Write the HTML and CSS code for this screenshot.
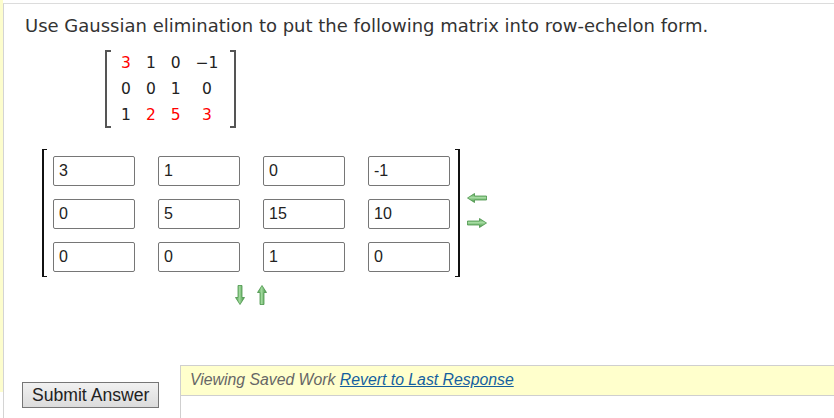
FILE: index.html
```html
<!DOCTYPE html>
<html>
<head>
<meta charset="utf-8">
<link rel="stylesheet" href="styles.css">
</head>
<body>
<div class="frame">
  <div class="strip"></div>
  <div class="main">
    <p class="question">Use Gaussian elimination to put the following matrix into row-echelon form.</p>
    <div class="given">
      <span class="br br-l"></span>
      <div class="given-grid">
        <span class="red">3</span><span>1</span><span>0</span><span>−1</span>
        <span>0</span><span>0</span><span>1</span><span>0</span>
        <span>1</span><span class="red">2</span><span class="red">5</span><span class="red">3</span>
      </div>
      <span class="br br-r"></span>
    </div>
    <div class="answer">
      <div class="answer-col">
        <div class="answer-matrix">
          <span class="abr abr-l"></span>
          <div class="answer-grid">
            <input class="cell" value="3"><input class="cell" value="1"><input class="cell" value="0"><input class="cell" value="-1">
            <input class="cell" value="0"><input class="cell" value="5"><input class="cell" value="15"><input class="cell" value="10">
            <input class="cell" value="0"><input class="cell" value="0"><input class="cell" value="1"><input class="cell" value="0">
          </div>
          <span class="abr abr-r"></span>
        </div>
        <div class="col-arrows">
          <svg class="varrow" width="10" height="20" viewBox="0 0 10 20">
            <defs><linearGradient id="gv" x1="0" y1="0" x2="1" y2="0"><stop offset="0" stop-color="#4f9d4f"/><stop offset="0.45" stop-color="#9fd89b"/><stop offset="1" stop-color="#3f8f3f"/></linearGradient></defs>
            <path d="M3 0.5 H7 V12.5 H9.5 L5 19.5 L0.5 12.5 H3 Z" fill="url(#gv)" stroke="#4a944a" stroke-width="0.8"/>
          </svg>
          <svg class="varrow" width="10" height="20" viewBox="0 0 10 20">
            <path d="M3 19.5 H7 V7.5 H9.5 L5 0.5 L0.5 7.5 H3 Z" fill="url(#gv)" stroke="#4a944a" stroke-width="0.8"/>
          </svg>
        </div>
      </div>
      <div class="row-arrows">
        <svg width="20" height="10" viewBox="0 0 20 10">
          <defs><linearGradient id="gh" x1="0" y1="0" x2="0" y2="1"><stop offset="0" stop-color="#4f9d4f"/><stop offset="0.45" stop-color="#a6dca2"/><stop offset="1" stop-color="#3f8f3f"/></linearGradient></defs>
          <path d="M0.5 5 L7.5 0.5 V3 H19.5 V7 H7.5 V9.5 Z" fill="url(#gh)" stroke="#4a944a" stroke-width="0.8"/>
        </svg>
        <svg width="20" height="10" viewBox="0 0 20 10">
          <path d="M19.5 5 L12.5 0.5 V3 H0.5 V7 H12.5 V9.5 Z" fill="url(#gh)" stroke="#4a944a" stroke-width="0.8"/>
        </svg>
      </div>
    </div>
    <div class="bottom">
      <div class="submit-col"><button class="submit">Submit Answer</button></div>
      <div class="notice-col">
        <div class="notice">Viewing Saved Work <a href="#" class="revert">Revert to Last Response</a></div>
      </div>
    </div>
  </div>
</div>
</body>
</html>
```
FILE: styles.css
```css
html, body {
  margin: 0;
  padding: 0;
  background: #fff;
}
.frame {
  display: flex;
  height: 418px;
  overflow: hidden;
}
.strip {
  width: 3px;
  height: 392px;
  flex: none;
  background: #fdfdcd;
}
.main {
  flex: 1;
  margin-top: 3px;
  border-top: 1px solid #dcdcdc;
  border-left: 1px solid #d4d4d4;
  display: flex;
  flex-direction: column;
  padding-left: 21px;
  min-width: 0;
}
.question {
  margin: 11px 0 0 0;
  font-family: "DejaVu Sans", Verdana, sans-serif;
  font-size: 18px;
  line-height: 22px;
  color: #333;
  white-space: nowrap;
}
.given {
  display: flex;
  width: fit-content;
  margin: 13px 0 0 80px;
  height: 78px;
}
.br {
  width: 4px;
  border: 2px solid #555;
}
.br-l { border-right: none; }
.br-r { border-left: none; }
.given-grid {
  display: grid;
  grid-template-columns: repeat(4, auto);
  column-gap: 15px;
  justify-items: center;
  padding: 0 12px 0 10px;
  font-family: "DejaVu Sans", Verdana, sans-serif;
  font-size: 15.5px;
  line-height: 26px;
  color: #222;
}
.red { color: #f00; }
.answer {
  display: flex;
  align-items: flex-start;
  margin: 21px 0 0 17px;
}
.answer-col {
  display: flex;
  flex-direction: column;
}
.answer-matrix {
  display: flex;
}
.abr {
  width: 3px;
  border: 2px solid #111;
  border-top-width: 1.5px;
  border-bottom-width: 1.5px;
}
.abr-l { border-right: none; }
.abr-r { border-left: none; }
.answer-grid {
  display: grid;
  grid-template-columns: repeat(4, 82px);
  column-gap: 23px;
  row-gap: 13px;
  padding: 7px 5px 5px 6px;
}
.cell {
  box-sizing: border-box;
  width: 82px;
  height: 30px;
  margin: 0;
  border: 1px solid #767676;
  border-radius: 2px;
  padding: 0 5px;
  font-family: "Liberation Sans", Arial, sans-serif;
  font-size: 16px;
  color: #222;
  background: #fff;
}
.col-arrows {
  display: flex;
  justify-content: center;
  gap: 12px;
  margin-top: 8px;
}
.row-arrows {
  display: flex;
  flex-direction: column;
  gap: 15px;
  margin: 44px 0 0 7px;
}
.row-arrows svg, .col-arrows svg { display: block; }
.bottom {
  margin-top: auto;
  margin-left: -21px;
  height: 53px;
  display: flex;
}
.submit-col {
  width: 176px;
  flex: none;
}
.submit {
  margin: 17px 0 0 18px;
  height: 26px;
  padding: 0 9px;
  border: 1px solid #767676;
  border-radius: 0;
  background: linear-gradient(#f1f1f1, #dcdcdc);
  font-family: "Liberation Sans", Arial, sans-serif;
  font-size: 17.6px;
  color: #222;
  line-height: 24px;
}
.notice-col {
  flex: 1;
  border-left: 1px solid #cfcfcf;
}
.notice {
  height: 29px;
  border-top: 1px solid #cfcfcf;
  border-bottom: 1px solid #cfcfcf;
  background: #ffffcc;
  padding-left: 9px;
  font-family: "Liberation Sans", Arial, sans-serif;
  font-style: italic;
  font-size: 15.8px;
  line-height: 27px;
  color: #666;
  white-space: nowrap;
}
.revert {
  color: #145f9f;
  text-decoration: underline;
}
```
